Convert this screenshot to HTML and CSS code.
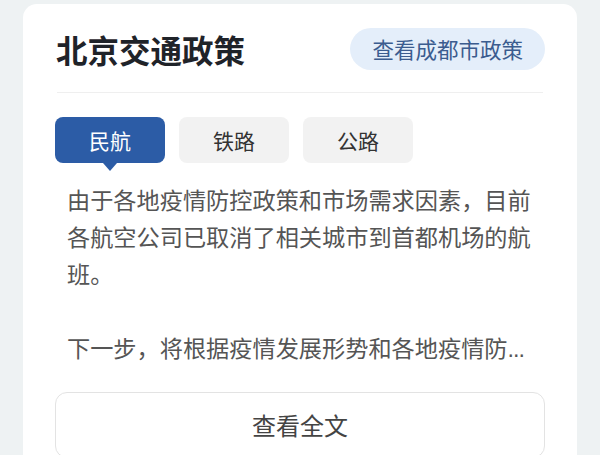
FILE: index.html
```html
<!DOCTYPE html>
<html lang="zh">
<head>
<meta charset="utf-8">
<link rel="stylesheet" href="styles.css">
</head>
<body>
<div class="card">
  <div class="header">
    <h1 class="title">北京交通政策</h1>
    <a class="pill">查看成都市政策</a>
  </div>
  <div class="divider"></div>
  <div class="tabs">
    <div class="tab active">民航</div>
    <div class="tab">铁路</div>
    <div class="tab">公路</div>
  </div>
  <div class="content">
    <p>由于各地疫情防控政策和市场需求因素，目前各航空公司已取消了相关城市到首都机场的航班。</p>
    <p class="blank">&nbsp;</p>
    <p class="clip">下一步，将根据疫情发展形势和各地疫情防<span class="dots">...</span></p>
  </div>
  <div class="more">查看全文</div>
</div>
</body>
</html>
```

FILE: styles.css
```css
* { box-sizing: border-box; }
html, body {
  margin: 0;
  padding: 0;
  background: #eef2f3;
  font-family: "Noto Sans CJK SC", "Noto Sans", sans-serif;
  overflow: hidden;
}
.card {
  margin: 4px 23px 0;
  background: #fff;
  border-radius: 14px;
  padding: 24px 34px 40px;
  height: 520px;
}
.header {
  display: flex;
  align-items: center;
  justify-content: space-between;
  height: 42px;
}
.title {
  margin: 0 0 0 -1px;
  font-size: 31.5px;
  font-weight: 700;
  color: #1f2329;
  line-height: 42px;
}
.pill {
  background: #e4eefa;
  color: #3b5c8f;
  font-size: 21.5px;
  line-height: 42px;
  height: 42px;
  padding: 0 22px;
  border-radius: 21px;
  margin-right: -2px;
}
.divider {
  height: 1px;
  background: #efefef;
  margin-top: 22px;
}
.tabs {
  display: flex;
  gap: 14px;
  margin: 24px 0 0 -2px;
}
.tab {
  position: relative;
  width: 110px;
  height: 46px;
  border-radius: 8px;
  background: #f2f2f2;
  color: #333;
  font-size: 21px;
  line-height: 46px;
  text-align: center;
}
.tab.active {
  background: #2c5ca6;
  color: #fff;
}
.tab.active::after {
  content: "";
  position: absolute;
  left: 50%;
  bottom: -8px;
  margin-left: -7px;
  border-left: 7px solid transparent;
  border-right: 7px solid transparent;
  border-top: 8px solid #2c5ca6;
}
.content {
  margin-top: 18px;
  padding-left: 10px;
  color: #555;
  font-size: 23.2px;
  line-height: 37px;
}
.content p { margin: 0; }
.clip { white-space: nowrap; }
.dots { font-family: "Liberation Sans", sans-serif; letter-spacing: -1px; }
.more {
  margin: 24px -2px 0;
  height: 66px;
  border: 1px solid #e3e3e3;
  border-radius: 12px;
  color: #444;
  font-size: 24px;
  line-height: 64px;
  text-align: center;
}
```
